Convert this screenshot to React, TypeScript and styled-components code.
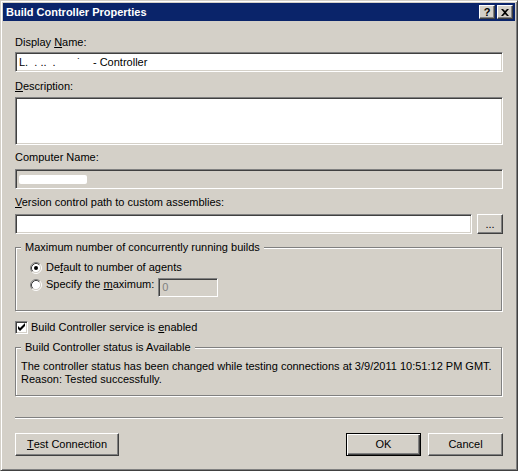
import React from 'react';
import styled, { createGlobalStyle, css } from 'styled-components';

const GlobalStyle = createGlobalStyle`
  html, body {
    margin: 0;
    padding: 0;
    background: #d4d0c8;
  }
  body {
    font-family: "Liberation Sans", Arial, sans-serif;
    font-size: 11px;
    line-height: 13px;
    color: #000;
  }
`;

const sunken = css`
  box-sizing: border-box;
  border: 1px solid;
  border-color: #808080 #fff #fff #808080;
  box-shadow: inset 1px 1px 0 #404040, inset -1px -1px 0 #d4d0c8;
`;

const raised = css`
  box-sizing: border-box;
  border: 1px solid;
  border-color: #fff #404040 #404040 #fff;
  box-shadow: inset -1px -1px 0 #808080, inset 1px 1px 0 #d4d0c8;
  background: #d4d0c8;
`;

function RadioIcon({ checked }: { checked?: boolean }) {
  return (
    <RadioMark width="12" height="12" viewBox="0 0 12 12">
      <circle cx="6" cy="6" r="4.5" fill="#fff" />
      <path d="M2.11 9.89A5.5 5.5 0 0 1 9.89 2.11" stroke="#808080" fill="none" />
      <path d="M9.89 2.11A5.5 5.5 0 0 1 2.11 9.89" stroke="#fff" fill="none" />
      <path d="M2.82 9.18A4.5 4.5 0 0 1 9.18 2.82" stroke="#404040" fill="none" />
      <path d="M9.18 2.82A4.5 4.5 0 0 1 2.82 9.18" stroke="#d4d0c8" fill="none" />
      {checked && <circle cx="6" cy="6" r="2" fill="#000" />}
    </RadioMark>
  );
}

function App() {
  return (
    <>
      <GlobalStyle />
      <Window>
        <TitleBar>
          <Title>Build Controller Properties</Title>
          <CaptionButton>?</CaptionButton>
          <CaptionButton $gap>
            <svg width="8" height="7" viewBox="0 0 8 7">
              <path d="M0 0h2l2 2 2-2h2L5 3.5 8 7H6L4 5 2 7H0l3-3.5z" fill="#000" />
            </svg>
          </CaptionButton>
        </TitleBar>

        <Body>
          <Label $mt={0}>
            Display <Key>N</Key>ame:
          </Label>
          <TextBox $mt={3}>L.  . ..  .       ˙    - Controller</TextBox>

          <Label $mt={8}>
            <Key>D</Key>escription:
          </Label>
          <TextBox $mt={4} $h={48} />

          <Label $mt={6}>Computer Name:</Label>
          <TextBox $mt={5} $disabled>
            <Redacted />
          </TextBox>

          <Label $mt={7}>
            <Key>V</Key>ersion control path to custom assemblies:
          </Label>
          <PathRow>
            <TextBox $grow />
            <BrowseButton>...</BrowseButton>
          </PathRow>

          <Group $mt={7}>
            <Legend>Maximum number of concurrently running builds</Legend>
            <GroupBody $pad="7px 0 13px 14px">
              <OptionRow>
                <Option>
                  <RadioIcon checked />
                  <span>
                    De<Key>f</Key>ault to number of agents
                  </span>
                </Option>
              </OptionRow>
              <OptionRow $mt={4}>
                <Option>
                  <RadioIcon />
                  <span>
                    Specify the <Key>m</Key>aximum:
                  </span>
                </Option>
                <SpinBox $disabled>0</SpinBox>
              </OptionRow>
            </GroupBody>
          </Group>

          <CheckRow>
            <CheckBox>
              <svg width="11" height="11" viewBox="0 0 11 11">
                <path d="M2 4 4 6 9 1v3L4 9 2 7z" fill="#000" />
              </svg>
            </CheckBox>
            <span>
              Build Controller service is <Key>e</Key>nabled
            </span>
          </CheckRow>

          <Group $mt={7}>
            <Legend>Build Controller status is Available</Legend>
            <GroupBody $pad="6px 0 9px 5px">
              <div>The controller status has been changed while testing connections at 3/9/2011 10:51:12 PM GMT.</div>
              <div>Reason: Tested successfully.</div>
            </GroupBody>
          </Group>

          <Separator />

          <ButtonRow>
            <Button $w={104}>
              <Key>T</Key>est Connection
            </Button>
            <Spacer />
            <Button $w={75} $default>
              OK
            </Button>
            <Button $w={75}>Cancel</Button>
          </ButtonRow>
        </Body>
      </Window>
    </>
  );
}

export default App;

const Window = styled.div`
  width: 518px;
  height: 471px;
  box-sizing: border-box;
  border: 1px solid;
  border-color: #d4d0c8 #404040 #404040 #d4d0c8;
  box-shadow: inset 1px 1px 0 #fff, inset -1px -1px 0 #808080;
  padding: 2px;
  background: #d4d0c8;
  display: flex;
  flex-direction: column;
`;

const TitleBar = styled.div`
  height: 18px;
  background: #0a246a;
  display: flex;
  align-items: center;
  padding: 0 2px 0 2px;
  color: #fff;
  font-weight: bold;
`;

const Title = styled.div`
  flex: 1;
  padding-left: 1px;
`;

const CaptionButton = styled.div<{ $gap?: boolean }>`
  ${raised}
  width: 16px;
  height: 14px;
  margin-left: ${p => (p.$gap ? 2 : 0)}px;
  display: flex;
  align-items: center;
  justify-content: center;
  color: #000;
  font-size: 11px;
  font-weight: bold;
  line-height: 12px;
`;

const Body = styled.div`
  flex: 1;
  display: flex;
  flex-direction: column;
  padding: 15px 12px 0 12px;
`;

const Key = styled.span`
  text-decoration: underline;
`;

const Label = styled.div<{ $mt: number }>`
  margin-top: ${p => p.$mt}px;
  height: 13px;
`;

const TextBox = styled.div<{ $h?: number; $mt?: number; $disabled?: boolean; $grow?: boolean }>`
  ${sunken}
  height: ${p => p.$h ?? 20}px;
  margin-top: ${p => p.$mt ?? 0}px;
  flex: ${p => (p.$grow ? 1 : 'none')};
  background: ${p => (p.$disabled ? '#d4d0c8' : '#fff')};
  color: ${p => (p.$disabled ? '#808080' : '#000')};
  padding: 3px 3px;
  white-space: pre;
  overflow: hidden;
`;

const Redacted = styled.span`
  display: inline-block;
  width: 68px;
  height: 9px;
  margin-top: 2px;
  background: #fff;
  border-radius: 2px;
`;

const PathRow = styled.div`
  display: flex;
  margin-top: 5px;
  gap: 5px;
`;

const BrowseButton = styled.div`
  ${raised}
  width: 26px;
  height: 20px;
  display: flex;
  align-items: center;
  justify-content: center;
  padding-top: 1px;
`;

const Group = styled.fieldset<{ $mt: number }>`
  margin: ${p => p.$mt}px 1px 0 0;
  padding: 0;
  min-width: 0;
  border: 1px solid #808080;
  box-shadow: inset 1px 1px 0 #fff, 1px 1px 0 #fff;
`;

const Legend = styled.legend`
  margin-left: 5px;
  padding: 0 4px;
  background: #d4d0c8;
  line-height: 13px;
`;

const GroupBody = styled.div<{ $pad: string }>`
  padding: ${p => p.$pad};
`;

const OptionRow = styled.div<{ $mt?: number }>`
  display: flex;
  align-items: flex-start;
  gap: 4px;
  margin-top: ${p => p.$mt ?? 0}px;
`;

const Option = styled.div`
  display: flex;
  align-items: center;
  gap: 4px;
  height: 13px;
`;

const RadioMark = styled.svg`
  display: block;
  flex: none;
`;

const SpinBox = styled(TextBox)`
  width: 60px;
  height: 19px;
  padding: 2px 3px;
`;

const CheckRow = styled.div`
  display: flex;
  align-items: center;
  gap: 3px;
  margin-top: 10px;
  height: 13px;
`;

const CheckBox = styled.div`
  ${sunken}
  width: 13px;
  height: 13px;
  background: #fff;
  display: flex;
  align-items: center;
  justify-content: center;
  flex: none;
`;

const Separator = styled.div`
  margin-top: 21px;
  border-top: 1px solid #808080;
  border-bottom: 1px solid #fff;
`;

const ButtonRow = styled.div`
  display: flex;
  gap: 7px;
  margin-top: 14px;
`;

const Spacer = styled.div`
  flex: 1;
`;

const Button = styled.div<{ $w: number; $default?: boolean }>`
  ${raised}
  width: ${p => p.$w}px;
  height: 23px;
  display: flex;
  align-items: center;
  justify-content: center;
  ${p =>
    p.$default &&
    css`
      border-color: #000;
      box-shadow: inset 1px 1px 0 #fff, inset -1px -1px 0 #404040, inset -2px -2px 0 #808080;
    `}
`;
